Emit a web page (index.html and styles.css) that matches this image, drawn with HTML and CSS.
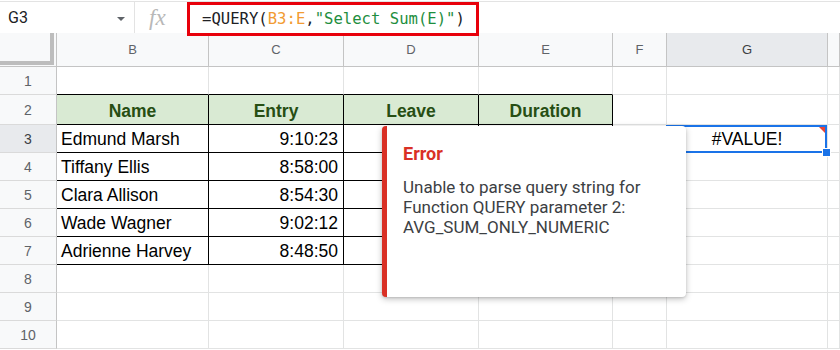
FILE: index.html
```html
<!DOCTYPE html>
<html lang="en">
<head>
    <meta charset="UTF-8">
    <title>QUERY error</title>
    <link rel="stylesheet" href="styles.css">
</head>
<body>
    <!-- Name box + formula bar -->
    <div class="topbar">
        <div class="namebox">
            <span>G3</span>
            <span class="caret"></span>
        </div>
        <div class="fx">fx</div>
        <div class="formula">
            <span>=QUERY(</span><span class="ref">B3:E</span><span>,</span><span class="str">"Select Sum(E)"</span><span>)</span>
        </div>
    </div>

    <!-- Sheet grid -->
    <div class="sheet">
        <div class="corner"><div class="freeze"></div></div>
        <div class="ch">B</div>
        <div class="ch">C</div>
        <div class="ch">D</div>
        <div class="ch">E</div>
        <div class="ch">F</div>
        <div class="ch sel">G</div>
        <div class="ch"></div>

        <div class="rh">1</div>
        <div class="c top"></div>
        <div class="c top"></div>
        <div class="c top"></div>
        <div class="c top"></div>
        <div class="c"></div>
        <div class="c"></div>
        <div class="c"></div>

        <div class="rh">2</div>
        <div class="c t th">Name</div>
        <div class="c t th">Entry</div>
        <div class="c t th">Leave</div>
        <div class="c t th">Duration</div>
        <div class="c"></div>
        <div class="c"></div>
        <div class="c"></div>

        <div class="rh sel">3</div>
        <div class="c t">Edmund Marsh</div>
        <div class="c t num">9:10:23</div>
        <div class="c t"></div>
        <div class="c t"></div>
        <div class="c"></div>
        <div class="c active">#VALUE!<span class="handle"></span></div>
        <div class="c"></div>

        <div class="rh">4</div>
        <div class="c t">Tiffany Ellis</div>
        <div class="c t num">8:58:00</div>
        <div class="c t"></div>
        <div class="c t"></div>
        <div class="c"></div>
        <div class="c"></div>
        <div class="c"></div>

        <div class="rh">5</div>
        <div class="c t">Clara Allison</div>
        <div class="c t num">8:54:30</div>
        <div class="c t"></div>
        <div class="c t"></div>
        <div class="c"></div>
        <div class="c"></div>
        <div class="c"></div>

        <div class="rh">6</div>
        <div class="c t">Wade Wagner</div>
        <div class="c t num">9:02:12</div>
        <div class="c t"></div>
        <div class="c t"></div>
        <div class="c"></div>
        <div class="c"></div>
        <div class="c"></div>

        <div class="rh">7</div>
        <div class="c t">Adrienne Harvey</div>
        <div class="c t num">8:48:50</div>
        <div class="c t"></div>
        <div class="c t"></div>
        <div class="c"></div>
        <div class="c"></div>
        <div class="c"></div>

        <div class="rh">8</div>
        <div class="c"></div>
        <div class="c"></div>
        <div class="c"></div>
        <div class="c"></div>
        <div class="c"></div>
        <div class="c"></div>
        <div class="c"></div>

        <div class="rh">9</div>
        <div class="c"></div>
        <div class="c"></div>
        <div class="c"></div>
        <div class="c"></div>
        <div class="c"></div>
        <div class="c"></div>
        <div class="c"></div>

        <div class="rh">10</div>
        <div class="c"></div>
        <div class="c"></div>
        <div class="c"></div>
        <div class="c"></div>
        <div class="c"></div>
        <div class="c"></div>
        <div class="c"></div>

        <!-- Error tooltip over the cells -->
        <div class="error-popup">
            <div class="error-title">Error</div>
            <div class="error-text">Unable to parse query string for<br>Function QUERY parameter 2:<br>AVG_SUM_ONLY_NUMERIC</div>
        </div>
    </div>
</body>
</html>
```

FILE: styles.css
```css
body {
    margin: 0;
    padding: 0;
    width: 840px;
    height: 350px;
    overflow: hidden;
    background-color: #fff;
    font-family: "Liberation Sans", Arial, sans-serif;
}
.topbar {
    display: flex;
    height: 32px;
    margin-top: 1px;
    border-top: 1px solid #e3e3e3;
    box-sizing: border-box;
    align-items: stretch;
}
.namebox {
    width: 135px;
    display: flex;
    align-items: center;
    justify-content: space-between;
    padding: 0 9px 0 8px;
    box-sizing: border-box;
    border-right: 1px solid #e3e3e3;
    font-family: Roboto, sans-serif;
    font-size: 16px;
    color: #202124;
}
.caret {
    width: 0;
    height: 0;
    border-left: 4px solid transparent;
    border-right: 4px solid transparent;
    border-top: 4px solid #5f6368;
    margin-top: 2px;
}
.fx {
    width: 52px;
    padding-left: 14px;
    box-sizing: border-box;
    display: flex;
    align-items: center;
    font-family: "Liberation Serif", serif;
    font-style: italic;
    font-size: 23px;
    color: #b8b8b8;
}
.formula {
    width: 292px;
    height: 34px;
    box-sizing: border-box;
    border: 3px solid #e8000b;
    padding-left: 12px;
    display: flex;
    align-items: center;
    font-family: "DejaVu Sans Mono", monospace;
    font-size: 15.6px;
    color: #202124;
    background-color: #fff;
    position: relative;
    z-index: 3;
}
.formula .ref {
    color: #f29b32;
}
.formula .str {
    color: #1e8e3e;
}
.sheet {
    position: relative;
    display: grid;
    grid-template-columns: 57px 152px 135px 135px 134px 54px 161px 1fr;
    grid-template-rows: 34px 28px 30px 28px 28px 28px 28px 28px 28px 28px 28px;
}
.corner {
    background-color: #f8f9fa;
    border-right: 1px solid #c4c4c4;
    border-bottom: 1px solid #c4c4c4;
    box-sizing: border-box;
}
.freeze {
    width: 54px;
    height: 32px;
    box-sizing: border-box;
    border-right: 4px solid #bdbdbd;
    border-bottom: 4px solid #bdbdbd;
}
.ch, .rh {
    background-color: #f8f9fa;
    color: #5f6368;
    font-size: 13px;
    display: flex;
    align-items: center;
    justify-content: center;
    box-sizing: border-box;
    border-right: 1px solid #c4c4c4;
    border-bottom: 1px solid #c4c4c4;
}
.rh {
    font-size: 14px;
    border-bottom-color: #dadada;
}
.ch.sel, .rh.sel {
    background-color: #e8eaed;
    color: #3c4043;
}
.c {
    box-sizing: border-box;
    border-right: 1px solid #e2e3e3;
    border-bottom: 1px solid #e2e3e3;
    font-size: 17.5px;
    line-height: 20px;
    color: #000;
    display: flex;
    align-items: flex-end;
    padding: 0 4px 3px 4px;
    white-space: nowrap;
}
.c.top {
    border-bottom-color: #000;
}
.c.t {
    border-right-color: #000;
    border-bottom-color: #000;
}
.c.th {
    background-color: #d9ead3;
    color: #274e13;
    font-weight: bold;
    justify-content: center;
}
.c.num {
    justify-content: flex-end;
    padding-right: 5px;
}
.c.active {
    position: relative;
    justify-content: center;
}
.c.active::before {
    content: "";
    position: absolute;
    top: 2px;
    right: 2px;
    border-top: 6px solid #ea4335;
    border-left: 6px solid transparent;
}
.c.active::after {
    content: "";
    position: absolute;
    top: 0;
    right: 0;
    bottom: -1px;
    left: -1px;
    border: 2px solid #1a73e8;
}
.handle {
    position: absolute;
    right: -4px;
    bottom: -5px;
    width: 7px;
    height: 7px;
    background-color: #1a73e8;
    border: 1px solid #fff;
    z-index: 2;
}
.error-popup {
    position: absolute;
    left: 382px;
    top: 93px;
    width: 304px;
    height: 171px;
    box-sizing: border-box;
    background-color: #fff;
    border-left: 5px solid #d93025;
    border-radius: 4px;
    box-shadow: 0 2px 6px rgba(0, 0, 0, 0.25), 0 1px 2px rgba(0, 0, 0, 0.1);
    padding: 16px 16px 0 16px;
    font-family: Roboto, sans-serif;
    z-index: 4;
}
.error-title {
    color: #d93025;
    font-size: 18px;
    font-weight: bold;
    line-height: 24px;
}
.error-text {
    margin-top: 11px;
    color: #3c4043;
    font-size: 17px;
    line-height: 20px;
}
```
